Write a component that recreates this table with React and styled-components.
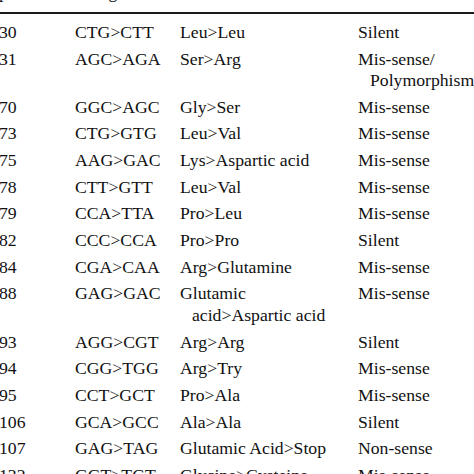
import React from 'react';
import styled, { createGlobalStyle } from 'styled-components';

const GlobalStyle = createGlobalStyle`
  html, body {
    margin: 0;
    padding: 0;
    background: #ffffff;
    overflow: hidden;
  }
`;

const Page = styled.div`
  width: 474px;
  height: 474px;
  overflow: hidden;
  background: #ffffff;
`;

const Table = styled.table`
  width: 520px;
  margin-top: -39px;
  margin-left: -1px;
  border-collapse: collapse;
  table-layout: fixed;
  font-family: "Liberation Serif", "Times New Roman", serif;
  font-size: 17.7px;
  line-height: 21.4px;
  color: #111111;
`;

const HeadCell = styled.th`
  text-align: left;
  font-weight: normal;
  vertical-align: bottom;
  padding: 0 0 8px 0;
  border-bottom: 2px solid #1a1a1a;
`;

const Cell = styled.td`
  vertical-align: top;
  padding: ${p => (p.first ? '8px' : '2.65px')} 0 2.65px 0;
  white-space: nowrap;
`;

const Cont = styled.span`
  display: block;
  padding-left: 12px;
`;

const rows = [
  ['30', 'CTG>CTT', 'Leu>Leu', 'Silent'],
  ['31', 'AGC>AGA', 'Ser>Arg', ['Mis-sense/', 'Polymorphism']],
  ['70', 'GGC>AGC', 'Gly>Ser', 'Mis-sense'],
  ['73', 'CTG>GTG', 'Leu>Val', 'Mis-sense'],
  ['75', 'AAG>GAC', 'Lys>Aspartic acid', 'Mis-sense'],
  ['78', 'CTT>GTT', 'Leu>Val', 'Mis-sense'],
  ['79', 'CCA>TTA', 'Pro>Leu', 'Mis-sense'],
  ['82', 'CCC>CCA', 'Pro>Pro', 'Silent'],
  ['84', 'CGA>CAA', 'Arg>Glutamine', 'Mis-sense'],
  ['88', 'GAG>GAC', ['Glutamic', 'acid>Aspartic acid'], 'Mis-sense'],
  ['93', 'AGG>CGT', 'Arg>Arg', 'Silent'],
  ['94', 'CGG>TGG', 'Arg>Try', 'Mis-sense'],
  ['95', 'CCT>GCT', 'Pro>Ala', 'Mis-sense'],
  ['106', 'GCA>GCC', 'Ala>Ala', 'Silent'],
  ['107', 'GAG>TAG', 'Glutamic Acid>Stop', 'Non-sense'],
  ['132', 'GGT>TGT', 'Glycine>Cysteine', 'Mis-sense'],
];

const renderValue = (value) =>
  Array.isArray(value) ? (
    <>
      {value[0]}
      <Cont>{value[1]}</Cont>
    </>
  ) : (
    value
  );

const App = () => {
  return (
    <Page>
      <GlobalStyle />
      <Table>
        <colgroup>
          <col style={{ width: 76 }} />
          <col style={{ width: 105 }} />
          <col style={{ width: 178 }} />
          <col style={{ width: 161 }} />
        </colgroup>
        <thead>
          <tr>
            <HeadCell>Codon<br />position</HeadCell>
            <HeadCell>Base<br />change</HeadCell>
            <HeadCell>Amino acid<br />substitution</HeadCell>
            <HeadCell>Type of<br />mutation</HeadCell>
          </tr>
        </thead>
        <tbody>
          {rows.map((row, i) => (
            <tr key={row[0]}>
              {row.map((value, j) => (
                <Cell key={j} first={i === 0}>
                  {renderValue(value)}
                </Cell>
              ))}
            </tr>
          ))}
        </tbody>
      </Table>
    </Page>
  );
};

export default App;
